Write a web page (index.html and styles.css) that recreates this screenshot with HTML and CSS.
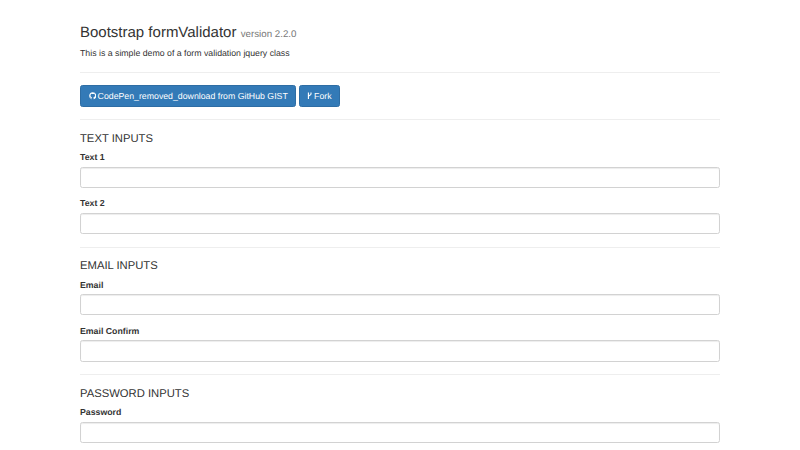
FILE: index.html
```html
<!DOCTYPE html>
<html lang="en">
<head>
  <meta charset="UTF-8" />
  <title>Bootstrap formValidator</title>
  <link rel="stylesheet" href="styles.css">
</head>
<body>
  <div class="container">
    <!-- Header -->
    <h1 class="title">Bootstrap formValidator <small>version 2.2.0</small></h1>
    <p class="lead">This is a simple demo of a form validation jquery class</p>
    <hr>
    <!-- Buttons -->
    <div class="actions">
      <a href="#" class="btn">
        <svg class="icon" viewBox="0 0 16 16"><path fill="currentColor" d="M8 .6a7.6 7.6 0 0 0-2.4 14.8c.4.1.5-.2.5-.4v-1.3c-2.1.4-2.6-1-2.6-1-.4-.9-.9-1.200-.9-1.200-.7-.5 0-.5 0-.5.8.1 1.200.8 1.200.8.7 1.200 1.800.8 2.300.6.1-.5.300-.8.500-1-1.700-.2-3.500-.8-3.500-3.700 0-.8.300-1.500.8-2-.1-.2-.3-1 .1-2 0 0 .6-.2 2.100.8a7.200 7.200 0 0 1 3.800 0c1.500-1 2.100-.8 2.100-.8.4 1 .2 1.800.1 2 .5.500.8 1.200.8 2 0 2.900-1.800 3.500-3.500 3.700.3.200.5.700.5 1.400V15c0 .2.100.5.500.4A7.600 7.600 0 0 0 8 .6z"/></svg>
        CodePen_removed_download from GitHub GIST
      </a>
      <a href="#" class="btn">
        <svg class="icon icon-fork" viewBox="0 0 10 16"><path fill="none" stroke="currentColor" stroke-width="2.400" d="M2.500 1v14M8 1v3c0 3-5.500 3-5.500 6"/></svg>
        Fork
      </a>
    </div>
    <hr>
    <!-- Text inputs -->
    <h4 class="section-title">TEXT INPUTS</h4>
    <div class="form-group">
      <label>Text 1</label>
      <input type="text" class="form-control">
    </div>
    <div class="form-group">
      <label>Text 2</label>
      <input type="text" class="form-control">
    </div>
    <hr>
    <!-- Email inputs -->
    <h4 class="section-title">EMAIL INPUTS</h4>
    <div class="form-group">
      <label>Email</label>
      <input type="text" class="form-control">
    </div>
    <div class="form-group">
      <label>Email Confirm</label>
      <input type="text" class="form-control">
    </div>
    <hr>
    <!-- Password inputs -->
    <h4 class="section-title">PASSWORD INPUTS</h4>
    <div class="form-group">
      <label>Password</label>
      <input type="password" class="form-control">
    </div>
  </div>
</body>
</html>
```

FILE: styles.css
```css
/* Global Styles */
html, body {
  margin: 0;
  padding: 0;
  height: 450px;
  overflow: hidden;
  background: #fff;
  font-family: 'Liberation Sans', Arial, sans-serif;
  font-size: 8.75px;
  line-height: 12.5px;
  color: #333;
  text-rendering: geometricPrecision;
}
.container {
  width: 640px;
  margin: 0 auto;
  padding-top: 25.2px;
}
/* Header */
.title {
  margin: 0 0 3.25px;
  font-size: 15px;
  line-height: 16.5px;
  font-weight: 500;
}
.title small {
  font-size: 9.75px;
  font-weight: 400;
  color: #777;
}
.lead {
  margin: 0 0 6.25px;
}
hr {
  margin: 12.5px 0;
  border: 0;
  border-top: 1px solid #eee;
}
/* Buttons */
.actions {
  display: flex;
  gap: 2.5px;
}
.btn {
  display: flex;
  align-items: center;
  gap: 1.6px;
  box-sizing: border-box;
  height: 21.25px;
  padding: 0 7.5px;
  background: #337ab7;
  border: 1px solid #2e6da4;
  border-radius: 2.5px;
  color: #fff;
  text-decoration: none;
}
.icon {
  width: 7.5px;
  height: 7.5px;
}
.icon-fork {
  width: 5.2px;
}
/* Form */
.section-title {
  margin: 0 0 5.7px;
  font-size: 11.25px;
  line-height: 12.7px;
  font-weight: 500;
}
.form-group {
  margin-bottom: 9.375px;
}
.form-group label {
  display: block;
  margin-bottom: 3.125px;
  font-weight: 700;
}
.form-control {
  display: block;
  box-sizing: border-box;
  width: 100%;
  height: 21.25px;
  padding: 0 7.5px;
  background: #fff;
  border: 1px solid #d2d2d2;
  border-radius: 2.5px;
  box-shadow: inset 0 1px 1px rgba(0,0,0,0.075);
}
```
